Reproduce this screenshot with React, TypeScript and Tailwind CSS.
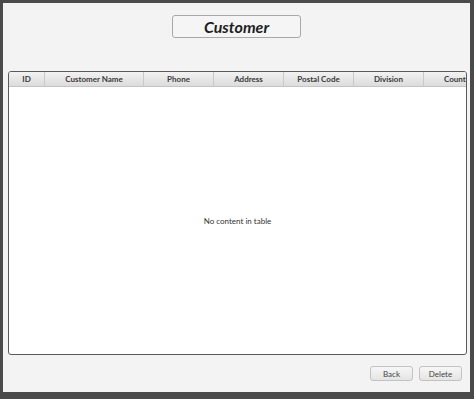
const columns = [
  { label: "ID", width: "w-[36px]" },
  { label: "Customer Name", width: "w-[99px]" },
  { label: "Phone", width: "w-[70px]" },
  { label: "Address", width: "w-[70px]" },
  { label: "Postal Code", width: "w-[70px]" },
  { label: "Division", width: "w-[70px]" },
  { label: "Country", width: "w-[70px]" },
];

function Button({ label, width }: { label: string; width: string }) {
  return (
    <button
      className={`${width} h-[15px] rounded-[3px] border border-[#c2c2c2] bg-gradient-to-b from-[#f7f7f7] to-[#e4e4e4] text-[8px] leading-none text-[#444]`}
    >
      {label}
    </button>
  );
}

export default function App() {
  return (
    <div className="h-[399px] w-[474px] bg-[#4a4a4a] pt-[3px] pl-[3px] pr-[4px] pb-[7px] font-['Lato',sans-serif]">
      <div className="flex h-full flex-col bg-[#f3f3f3]">
        <div className="flex justify-center pt-[12px]">
          <div className="flex h-[23px] w-[129px] items-center justify-center rounded-[3px] border border-[#a8a8a8] bg-[#f5f5f5]">
            <span className="text-[16px] font-bold italic leading-none text-[#1e1e1e]">
              Customer
            </span>
          </div>
        </div>

        <div className="ml-[5px] mr-[3px] mt-[33px] flex h-[284px] flex-col overflow-hidden rounded-[3px] border border-[#5a5a5a] bg-white">
          <div className="flex h-[15px] shrink-0 border-b border-[#c4c4c4] bg-gradient-to-b from-[#f2f2f2] to-[#dcdcdc]">
            {columns.map((c) => (
              <div
                key={c.label}
                className={`${c.width} flex shrink-0 items-center justify-center border-r border-[#c9c9c9] text-[8px] font-bold leading-none text-[#3a3a3a] whitespace-nowrap`}
              >
                {c.label}
              </div>
            ))}
          </div>
          <div className="flex flex-1 items-center justify-center">
            <span className="text-[8px] text-[#333]">No content in table</span>
          </div>
        </div>

        <div className="mr-[8px] mt-[11px] flex justify-end gap-[6px]">
          <Button label="Back" width="w-[43px]" />
          <Button label="Delete" width="w-[43px]" />
        </div>
      </div>
    </div>
  );
}
